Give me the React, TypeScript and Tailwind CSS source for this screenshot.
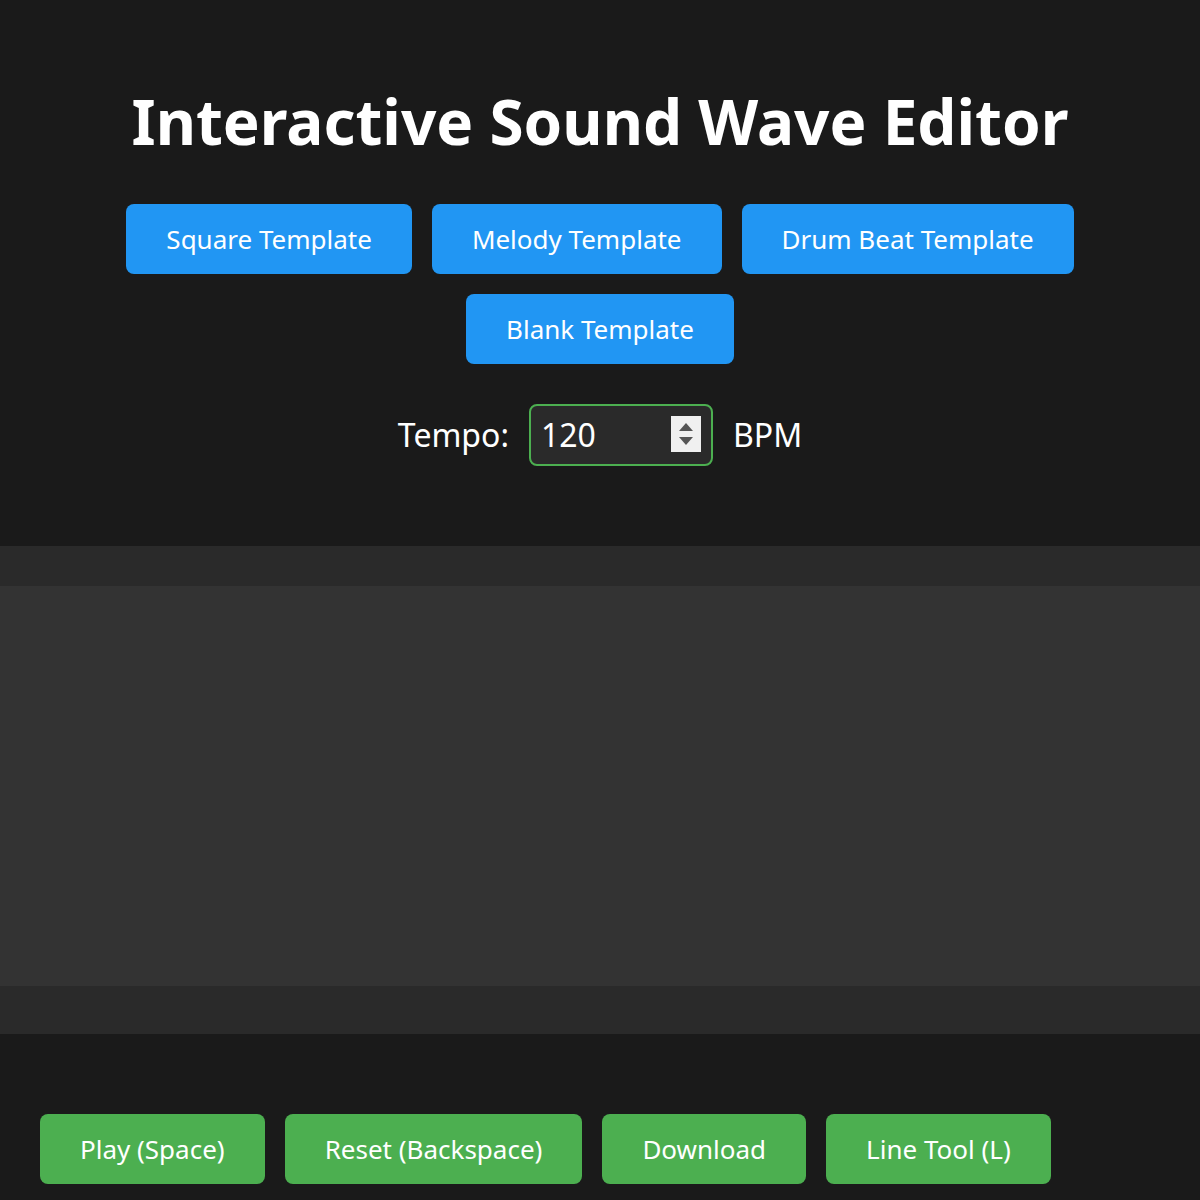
import React, { useState } from "react"

const blueBtn =
  "h-[70px] px-[40px] rounded-[8px] bg-[#2196f3] text-white text-[26px] leading-none"
const greenBtn =
  "h-[70px] px-[40px] rounded-[8px] bg-[#4caf50] text-white text-[26px] leading-none"

export default function App() {
  const [tempo, setTempo] = useState(120)

  return (
    <div className="min-h-[1200px] bg-[#1a1a1a] text-white font-['Roboto',sans-serif] flex flex-col">
      <h1 className="text-center text-[62px] font-bold leading-none mt-[90px]">
        Interactive Sound Wave Editor
      </h1>

      {/* Templates */}
      <div className="flex flex-wrap justify-center gap-[20px] mt-[52px] mx-auto w-[960px]">
        <button className={blueBtn}>Square Template</button>
        <button className={blueBtn}>Melody Template</button>
        <button className={blueBtn}>Drum Beat Template</button>
        <button className={blueBtn}>Blank Template</button>
      </div>

      {/* Tempo */}
      <div className="flex items-center justify-center gap-[20px] mt-[40px] text-[32px]">
        <span>Tempo:</span>
        <div className="relative w-[184px] h-[62px] rounded-[8px] border-2 border-[#4caf50] bg-[#2a2a2a] flex items-center">
          <input
            type="number"
            value={tempo}
            onChange={(e) => setTempo(Number(e.target.value))}
            className="w-full bg-transparent pl-[10px] text-[32px] outline-none [appearance:textfield] [&::-webkit-inner-spin-button]:appearance-none"
          />
          <div className="absolute right-[10px] top-[10px] w-[30px] h-[36px] bg-[#f0f0f0] flex flex-col items-center justify-center gap-[6px]">
            <svg width="14" height="8" viewBox="0 0 14 8"><path d="M7 0L14 8H0Z" fill="#555" /></svg>
            <svg width="14" height="8" viewBox="0 0 14 8"><path d="M0 0H14L7 8Z" fill="#555" /></svg>
          </div>
        </div>
        <span>BPM</span>
      </div>

      {/* Canvas */}
      <div className="mt-[80px] bg-[#2a2a2a] py-[40px] pb-[48px]">
        <div className="h-[400px] bg-[#333333]" />
      </div>

      {/* Controls */}
      <div className="flex gap-[20px] px-[40px] mt-[80px]">
        <button className={greenBtn}>Play (Space)</button>
        <button className={greenBtn}>Reset (Backspace)</button>
        <button className={greenBtn}>Download</button>
        <button className={greenBtn}>Line Tool (L)</button>
      </div>
    </div>
  )
}
